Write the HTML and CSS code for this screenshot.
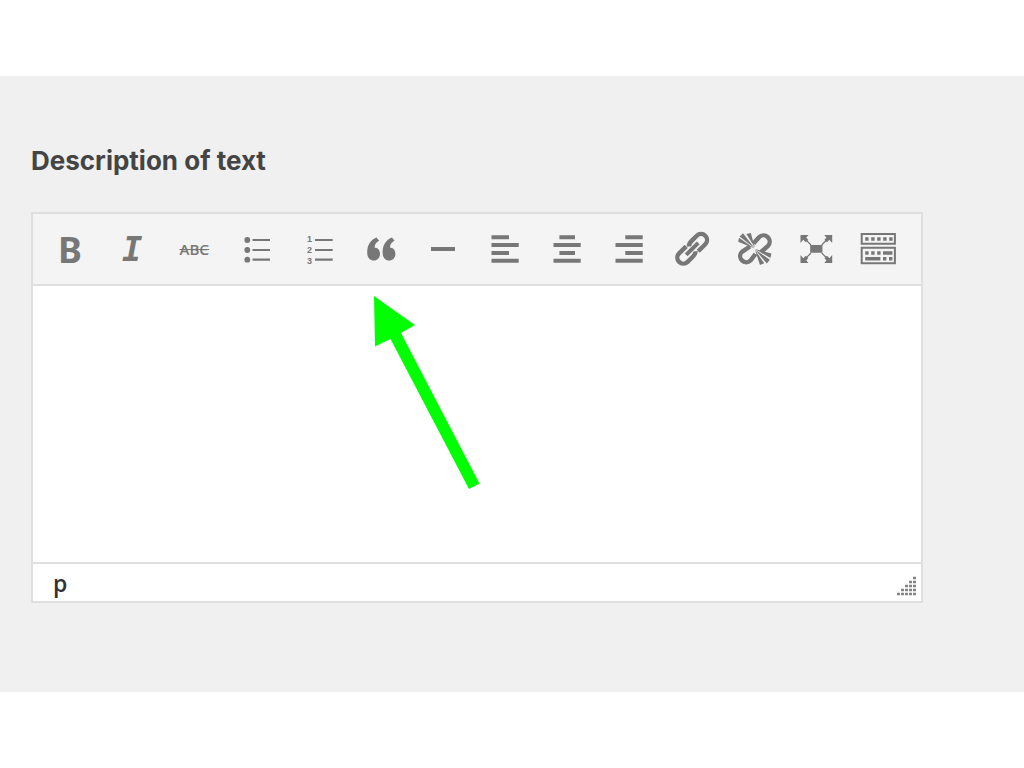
FILE: index.html
```html
<!DOCTYPE html>
<html lang="en">
<head>
<meta charset="utf-8">
<meta name="viewport" content="width=device-width, initial-scale=1">
<title>Description of text</title>
<link rel="stylesheet" href="styles.css">
</head>
<body>
<main class="panel">
  <label class="field-label" for="description">Description of text</label>
  <div class="editor">
    <div class="toolbar" role="toolbar" aria-label="Formatting">
      <button class="tool tool-bold" type="button" aria-label="Bold">B</button>
      <button class="tool tool-italic" type="button" aria-label="Italic">I</button>
      <button class="tool tool-strike" type="button" aria-label="Strikethrough">ABЄ</button>
      <button class="tool" type="button" aria-label="Bulleted list">
        <svg class="icon" viewBox="0 0 40 40"><g fill="currentColor"><circle cx="11.3" cy="11" r="2.9"/><circle cx="11.3" cy="21" r="2.9"/><circle cx="11.3" cy="30.7" r="2.9"/></g><path d="M16.5 11H34M16.5 21H34M16.5 30.7H34" stroke="currentColor" stroke-width="2.2"/></svg>
      </button>
      <button class="tool" type="button" aria-label="Numbered list">
        <svg class="icon" viewBox="0 0 40 40"><g class="list-digits"><text x="8" y="13">1</text><text x="8" y="24">2</text><text x="8" y="35">3</text></g><path d="M16 11H33.7M16 21H33.7M16 30.7H33.7" stroke="currentColor" stroke-width="2.2"/></svg>
      </button>
      <button class="tool" type="button" aria-label="Blockquote">
        <svg class="icon" viewBox="0 0 40 40"><path fill="currentColor" d="M15.6 8.6L18.1 11.8C15.2 13.3 13.6 15.5 13.6 18.8C16.8 18.5 19 21.3 19 24.8C19 28.8 16.4 31.6 12.8 31.6C8.6 31.6 6.2 28.2 6.2 23.4C6.2 16.4 9.3 11 15.6 8.6Z"/><path fill="currentColor" d="M31 8.6L33.5 11.8C30.6 13.3 29 15.5 29 18.8C32.2 18.5 34.4 21.3 34.4 24.8C34.4 28.8 31.8 31.6 28.2 31.6C24 31.6 21.6 28.2 21.6 23.4C21.6 16.4 24.7 11 31 8.6Z"/></svg>
      </button>
      <button class="tool" type="button" aria-label="Horizontal line">
        <svg class="icon" viewBox="0 0 40 40"><path d="M8 20H32" stroke="currentColor" stroke-width="4"/></svg>
      </button>
      <button class="tool" type="button" aria-label="Align left">
        <svg class="icon" viewBox="0 0 40 40"><path d="M6.5 8.3H24M6.5 16H33.7M6.5 24H24M6.5 31.7H33.7" stroke="currentColor" stroke-width="4"/></svg>
      </button>
      <button class="tool" type="button" aria-label="Align center">
        <svg class="icon" viewBox="0 0 40 40"><path d="M12.4 8.3H28M6.5 16H33.7M12.4 24H28M6.5 31.7H33.7" stroke="currentColor" stroke-width="4"/></svg>
      </button>
      <button class="tool" type="button" aria-label="Align right">
        <svg class="icon" viewBox="0 0 40 40"><path d="M16.3 8.3H33.7M6.5 16H33.7M16.3 24H33.7M6.5 31.7H33.7" stroke="currentColor" stroke-width="4"/></svg>
      </button>
      <button class="tool" type="button" aria-label="Insert link">
        <svg class="icon" viewBox="0 0 40 40"><g transform="translate(21.2 19.8) rotate(-45)" fill="none" stroke="currentColor" stroke-width="4.4"><path d="M-2.5 -6H-12.5A6 6 0 0 0 -12.5 6H-5.5C-2.5 6 -.5 5.4 .6 4"/><path d="M2.5 6H12.5A6 6 0 0 0 12.5 -6H5.5C2.5 -6 .5 -5.4 -.6 -4"/><path d="M-8.5 0H8.5" stroke-width="4"/></g></svg>
      </button>
      <button class="tool" type="button" aria-label="Remove link">
        <svg class="icon" viewBox="0 0 40 40"><g fill="none" stroke="currentColor" stroke-width="4.4"><path d="M19.500 14.500L25 8.300A6 6 0 0 1 34 16.800L27 23"/><path d="M16 17.500L8 22.800A6 6 0 0 0 16.500 31.500L21.500 25"/></g><g fill="currentColor"><path d="M20.5 19.5L4.2 12.8L5 8.8Z"/><path d="M20.5 19L5.6 7.5L9 4.2Z"/><path d="M20.8 18.5L12.4 5L16.8 4Z"/><path d="M21 20L37.4 24.6L36.4 29Z"/><path d="M21 20.5L35.8 30.8L32.8 34.5Z"/><path d="M21 21L30.2 34.2L26 36Z"/></g></svg>
      </button>
      <button class="tool" type="button" aria-label="Fullscreen">
        <svg class="icon" viewBox="0 0 40 40"><g fill="currentColor"><path d="M14.2 16H26.4V23.8H14.2ZM4.5 6H12.5L10.3 8.4L12.3 11L9.7 13.2L7.3 10.8L4.5 14ZM36.2 6V14L33.4 10.8L31 13.2L28.4 11L30.4 8.4L28.2 6ZM4.5 34V26L7.3 29.2L9.7 26.8L12.3 29L10.3 31.6L12.5 34ZM36.2 34H28.2L30.4 31.6L28.4 29L31 26.8L33.4 29.2L36.2 26Z"/></g><path d="M10 11L15 16M30.7 11L25.7 16M10 29L15 24M30.7 29L25.7 24" stroke="currentColor" stroke-width="1.2"/></svg>
      </button>
      <button class="tool" type="button" aria-label="Toggle toolbar">
        <svg class="icon" viewBox="0 0 40 40"><path d="M3.7 5H36.9V14.800H3.7ZM3.7 18.800H36.9V34.2H3.7Z" fill="none" stroke="currentColor" stroke-width="2"/><path d="M7.200 10H10.600M13.200 10H16.600M19.200 10H22.600M25.200 10H28.600M31.200 10H34.600M7.200 24H10.600M13.200 24H16.600M19.200 24H22.600M25 24H34.400M7.200 29.800H22.400M25 29.800H28.400M31 29.800H34.400" stroke="currentColor" stroke-width="3.400"/></svg>
      </button>
    </div>
    <div class="writing-area">
      <textarea class="text-input" id="description"></textarea>
      <svg class="pointer" viewBox="0 0 106 193" aria-hidden="true"><path fill="#0f0" d="M0 0L41 29L27 37L105.5 187.5L95 193L16.5 43L1 50.5Z"/></svg>
    </div>
    <div class="statusbar">
      <span class="path">p</span>
      <svg class="grip" viewBox="0 0 20 20" aria-hidden="true"><path d="M16 2h3M12 6h7M8 10h11M4 14h15M0 18h19" stroke="#858585" stroke-width="2.6" stroke-dasharray="3 1"/></svg>
    </div>
  </div>
</main>
</body>
</html>
```
FILE: styles.css
```css
* {
  box-sizing: border-box;
}

body {
  margin: 0;
  padding: 76px 0;
  background: #fff;
  color: #444;
  font-family: Inter, "Liberation Sans", sans-serif;
}

.panel {
  padding: 65px 101px 89px 31px;
  background: #f0f0f0;
}

.field-label {
  display: block;
  margin-bottom: 31px;
  font-size: 26px;
  font-weight: 700;
  line-height: 40px;
}

.editor {
  border: 2px solid #dfdfdf;
  background: #fff;
}

.toolbar {
  display: flex;
  height: 72px;
  padding: 0 12px 0 6px;
  border-bottom: 2px solid #dfdfdf;
  background: #f4f4f4;
}

.tool {
  display: flex;
  flex: 1 1 0;
  align-items: center;
  justify-content: center;
  min-width: 0;
  padding: 0;
  border: 0;
  background: none;
  color: #777;
}

.icon {
  flex: none;
  width: 40px;
  height: 40px;
}

.tool-bold {
  font: 700 36px "Noto Sans", sans-serif;
}

.tool-italic {
  font: italic 700 34px "DejaVu Sans Mono", monospace;
}

.tool-strike {
  font: 600 15px "Open Sans", sans-serif;
  text-decoration: line-through;
}

.list-digits {
  fill: currentColor;
  font: 700 9px "Liberation Sans", sans-serif;
}

.writing-area {
  position: relative;
  height: 276px;
}

.text-input {
  display: block;
  width: 100%;
  height: 100%;
  padding: 16px 20px;
  border: 0;
  outline: 0;
  resize: none;
  background: #fff;
  color: #333;
  font: 24px "Open Sans", sans-serif;
}

.pointer {
  position: absolute;
  top: 10px;
  left: 341px;
  width: 106px;
  height: 193px;
  pointer-events: none;
}

.statusbar {
  display: flex;
  align-items: center;
  justify-content: space-between;
  height: 39px;
  padding: 0 4px 0 20px;
  border-top: 2px solid #dfdfdf;
}

.path {
  color: #333;
  font: 600 23px/36px "Open Sans", sans-serif;
}

.grip {
  width: 20px;
  height: 20px;
  margin-top: 6px;
}
```
